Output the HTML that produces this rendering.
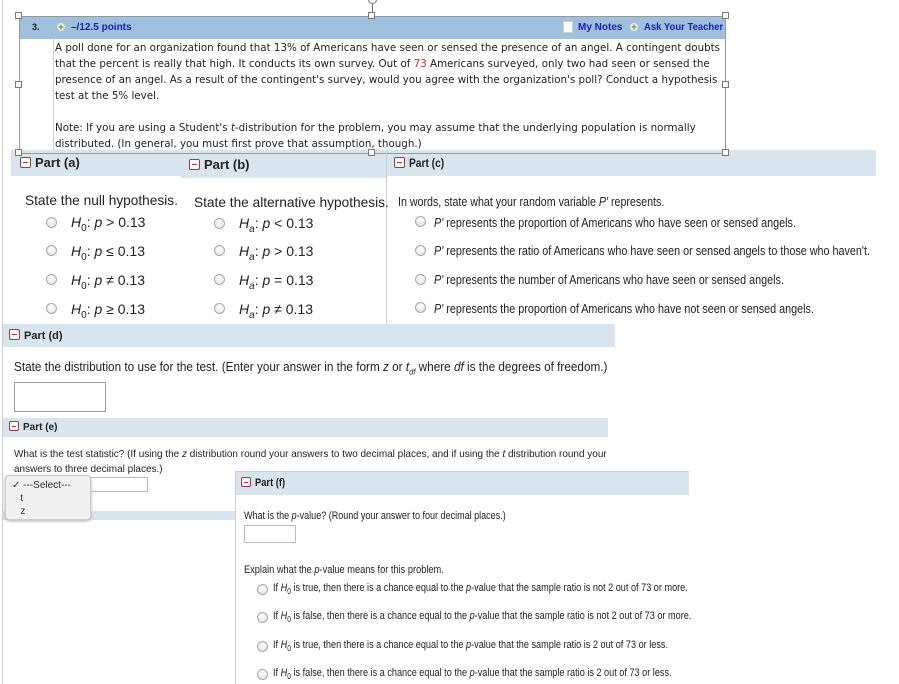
<!DOCTYPE html>
<html><head><meta charset="utf-8"><style>
*{margin:0;padding:0;box-sizing:border-box}
body{width:899px;height:684px;background:#fff;position:relative;overflow:hidden;font-family:"Liberation Sans",Arial,sans-serif;color:#222}
.a{position:absolute;white-space:nowrap}
.c{display:inline-block;transform-origin:left center}
.bar{position:absolute;background:#d8e4ee}
.minus{display:inline-block;width:11px;height:11px;border:1.5px solid #a33;border-radius:2px;position:relative;vertical-align:-1px;margin-right:4px;background:#fff}
.minus:after{content:"";position:absolute;left:2px;right:2px;top:3.5px;height:1.5px;background:#a33}
.rad{position:absolute;width:11px;height:11px;border-radius:50%;border:1px solid #aaa;background:radial-gradient(circle at 50% 35%,#fff,#ddd)}
.h{position:absolute;width:7px;height:7px;border:1px solid #777;background:#fff}
.q{font-family:"DejaVu Sans",Verdana,sans-serif;font-size:10.3px;color:#222;line-height:16px}
.box{position:absolute;border:1px solid #bbb;background:#fff}
</style></head><body>
<div style="position:absolute;left:2px;top:0;width:1px;height:684px;background:#ccc"></div>

<div style="position:absolute;left:19px;top:16px;width:707px;height:138px;border:1px solid #999"></div>
<div style="position:absolute;left:20px;top:17px;width:705px;height:22px;background:#9fc0dd"></div>
<div class="a" style="left:32px;top:22px;font-size:9px;font-weight:bold">3.</div>
<div class="a" style="left:56px;top:22px;width:10px;height:10px;border-radius:50%;background:#e8e8e8;border:1px solid #bbb;font-size:9px;color:#2a2;line-height:8px;text-align:center;font-weight:bold">+</div>
<div class="a" style="left:71px;top:22px;font-size:10px;font-weight:bold;color:#1a1acc">–/12.5 points</div>
<div class="a" style="left:563px;top:21px;width:10px;height:12px;background:#fff;border:1px solid #ccc"></div>
<div class="a" style="left:578px;top:22px;font-size:10px;font-weight:bold;color:#1a1acc">My Notes</div>
<div class="a" style="left:629px;top:22px;width:10px;height:10px;border-radius:50%;background:#e8e8e8;border:1px solid #bbb;font-size:9px;color:#2a2;line-height:8px;text-align:center;font-weight:bold">+</div>
<div class="a" style="left:644px;top:22px;font-size:10px;font-weight:bold;color:#1a1acc"><span class="c" style="transform:scaleX(.95)">Ask Your Teacher</span></div>
<div style="position:absolute;left:53px;top:39px;width:1px;height:111px;background:#ccc"></div>
<div class="a q" style="left:55px;top:40px">A poll done for an organization found that 13% of Americans have seen or sensed the presence of an angel. A contingent doubts<br>that the percent is really that high. It conducts its own survey. Out of <span style="color:#e22">73</span> Americans surveyed, only two had seen or sensed the<br>presence of an angel. As a result of the contingent's survey, would you agree with the organization's poll? Conduct a hypothesis<br>test at the 5% level.<br><br>Note: If you are using a Student's <i>t</i>-distribution for the problem, you may assume that the underlying population is normally<br>distributed. (In general, you must first prove that assumption, though.)</div>
<div style="position:absolute;left:372px;top:0;width:1px;height:14px;background:#777"></div>
<div class="a" style="left:368px;top:-5px;width:9px;height:9px;border:1px solid #777;border-radius:50%;background:#fff"></div>
<div class="h" style="left:15px;top:12px"></div><div class="h" style="left:368px;top:12px"></div><div class="h" style="left:722px;top:12px"></div>
<div class="h" style="left:15px;top:81px"></div><div class="h" style="left:722px;top:81px"></div>

<div class="bar" style="left:11px;top:150px;width:865px;height:26px"></div>
<div style="position:absolute;left:181px;top:153px;width:205px;height:25px;background:#d8e4ee"></div>
<div style="position:absolute;left:19px;top:153px;width:707px;height:1px;background:#999"></div>
<div class="h" style="left:15px;top:149px"></div><div class="h" style="left:368px;top:149px"></div><div class="h" style="left:722px;top:149px"></div>
<div class="a" style="left:20px;top:155px;font-size:13px;font-weight:bold"><span class="minus"></span>Part (a)</div>
<div class="a" style="left:189px;top:157px;font-size:13px;font-weight:bold"><span class="minus"></span>Part (b)</div>
<div class="a" style="left:394px;top:156px;font-size:12px;font-weight:bold"><span class="minus"></span><span class="c" style="transform:scaleX(.85)">Part (c)</span></div>
<div style="position:absolute;left:386px;top:150px;width:1px;height:174px;background:#ccc"></div>

<div class="a" style="left:25px;top:193px;font-size:13.7px">State the null hypothesis.</div>
<div class="a" style="left:194px;top:195px;font-size:13.7px">State the alternative hypothesis.</div>
<div class="rad" style="left:46px;top:217px"></div><div class="a" style="left:71px;top:214px;font-size:14px"><i>H</i><sub style="font-size:10px">0</sub>: <i>p</i> &gt; 0.13</div>
<div class="rad" style="left:46px;top:245px"></div><div class="a" style="left:71px;top:243px;font-size:14px"><i>H</i><sub style="font-size:10px">0</sub>: <i>p</i> ≤ 0.13</div>
<div class="rad" style="left:46px;top:274px"></div><div class="a" style="left:71px;top:272px;font-size:14px"><i>H</i><sub style="font-size:10px">0</sub>: <i>p</i> ≠ 0.13</div>
<div class="rad" style="left:46px;top:303px"></div><div class="a" style="left:71px;top:301px;font-size:14px"><i>H</i><sub style="font-size:10px">0</sub>: <i>p</i> ≥ 0.13</div>
<div class="rad" style="left:214px;top:218px"></div><div class="a" style="left:239px;top:215px;font-size:14px"><i>H</i><sub style="font-size:10px"><i>a</i></sub>: <i>p</i> &lt; 0.13</div>
<div class="rad" style="left:214px;top:245px"></div><div class="a" style="left:239px;top:243px;font-size:14px"><i>H</i><sub style="font-size:10px"><i>a</i></sub>: <i>p</i> &gt; 0.13</div>
<div class="rad" style="left:214px;top:274px"></div><div class="a" style="left:239px;top:272px;font-size:14px"><i>H</i><sub style="font-size:10px"><i>a</i></sub>: <i>p</i> = 0.13</div>
<div class="rad" style="left:214px;top:303px"></div><div class="a" style="left:239px;top:301px;font-size:14px"><i>H</i><sub style="font-size:10px"><i>a</i></sub>: <i>p</i> ≠ 0.13</div>

<div class="a" style="left:398px;top:194px;font-size:13px"><span class="c" style="transform:scaleX(.82)">In words, state what your random variable <i>P'</i> represents.</span></div>
<div class="rad" style="left:415px;top:216px"></div><div class="a" style="left:434px;top:215px;font-size:13px"><span class="c" style="transform:scaleX(.83)"><i>P'</i> represents the proportion of Americans who have seen or sensed angels.</span></div>
<div class="rad" style="left:415px;top:245px"></div><div class="a" style="left:434px;top:243px;font-size:13px"><span class="c" style="transform:scaleX(.83)"><i>P'</i> represents the ratio of Americans who have seen or sensed angels to those who haven't.</span></div>
<div class="rad" style="left:415px;top:274px"></div><div class="a" style="left:434px;top:272px;font-size:13px"><span class="c" style="transform:scaleX(.83)"><i>P'</i> represents the number of Americans who have seen or sensed angels.</span></div>
<div class="rad" style="left:415px;top:302px"></div><div class="a" style="left:434px;top:301px;font-size:13px"><span class="c" style="transform:scaleX(.83)"><i>P'</i> represents the proportion of Americans who have not seen or sensed angels.</span></div>

<div class="bar" style="left:3px;top:324px;width:612px;height:23px"></div>
<div class="a" style="left:9px;top:329px;font-size:11px;font-weight:bold"><span class="minus"></span>Part (d)</div>
<div class="a" style="left:14px;top:360px;font-size:12.5px"><span class="c" style="transform:scaleX(.94)">State the distribution to use for the test. (Enter your answer in the form <i>z</i> or <i>t<sub style="font-size:8px">df</sub></i> where <i>df</i> is the degrees of freedom.)</span></div>
<div class="box" style="left:14px;top:382px;width:92px;height:30px;border-color:#999"></div>

<div class="bar" style="left:3px;top:418px;width:605px;height:19px"></div>
<div class="a" style="left:9px;top:421px;font-size:10px;font-weight:bold"><span class="minus" style="width:10px;height:10px"></span>Part (e)</div>
<div class="a" style="left:14px;top:447px;font-size:10.5px;line-height:15px"><span class="c" style="transform:scaleX(.95)">What is the test statistic? (If using the <i>z</i> distribution round your answers to two decimal places, and if using the <i>t</i> distribution round your</span><br><span class="c" style="transform:scaleX(.95)">answers to three decimal places.)</span></div>
<div class="box" style="left:88px;top:477px;width:60px;height:15px"></div>
<div class="bar" style="left:3px;top:511px;width:232px;height:9px"></div>
<div style="position:absolute;left:5px;top:475px;width:86px;height:45px;background:#f0f0f0;border:1px solid #ccc;border-radius:4px;box-shadow:0 1px 3px #aaa;font-size:10px;line-height:13px;padding:3px 0 0 6px;color:#333">✓ ---Select---<br>&nbsp;&nbsp;&nbsp;t<br>&nbsp;&nbsp;&nbsp;z</div>

<div style="position:absolute;left:235px;top:471px;width:454px;height:213px;background:#fff;border-left:1px solid #ccc;border-top:1px solid #ccc"></div>
<div class="bar" style="left:236px;top:472px;width:453px;height:23px"></div>
<div class="a" style="left:241px;top:477px;font-size:11px;font-weight:bold"><span class="minus" style="width:10px;height:10px"></span><span class="c" style="transform:scaleX(.85)">Part (f)</span></div>
<div class="a" style="left:244px;top:510px;font-size:11px"><span class="c" style="transform:scaleX(.82)">What is the <i>p</i>-value? (Round your answer to four decimal places.)</span></div>
<div class="box" style="left:244px;top:525px;width:52px;height:18px"></div>
<div class="a" style="left:244px;top:564px;font-size:11px"><span class="c" style="transform:scaleX(.84)">Explain what the <i>p</i>-value means for this problem.</span></div>
<div class="rad" style="left:257px;top:584px"></div><div class="a" style="left:273px;top:582px;font-size:11px"><span class="c" style="transform:scaleX(.83)">If <i>H</i><sub style="font-size:8px">0</sub> is true, then there is a chance equal to the <i>p</i>-value that the sample ratio is not 2 out of 73 or more.</span></div>
<div class="rad" style="left:257px;top:612px"></div><div class="a" style="left:273px;top:610px;font-size:11px"><span class="c" style="transform:scaleX(.83)">If <i>H</i><sub style="font-size:8px">0</sub> is false, then there is a chance equal to the <i>p</i>-value that the sample ratio is not 2 out of 73 or more.</span></div>
<div class="rad" style="left:257px;top:641px"></div><div class="a" style="left:273px;top:639px;font-size:11px"><span class="c" style="transform:scaleX(.83)">If <i>H</i><sub style="font-size:8px">0</sub> is true, then there is a chance equal to the <i>p</i>-value that the sample ratio is 2 out of 73 or less.</span></div>
<div class="rad" style="left:257px;top:669px"></div><div class="a" style="left:273px;top:667px;font-size:11px"><span class="c" style="transform:scaleX(.83)">If <i>H</i><sub style="font-size:8px">0</sub> is false, then there is a chance equal to the <i>p</i>-value that the sample ratio is 2 out of 73 or less.</span></div>
</body></html>
